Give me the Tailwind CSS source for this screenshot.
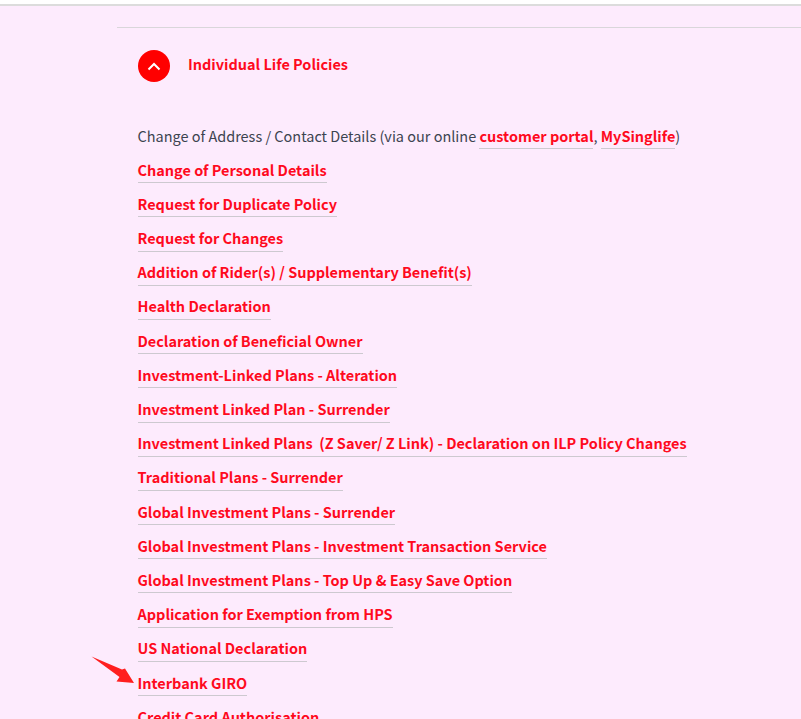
<!DOCTYPE html>
<html lang="en">
<head>
    <meta charset="UTF-8">
    <title>Individual Life Policies</title>
    <script src="https://cdn.jsdelivr.net/npm/@tailwindcss/browser@4"></script>
</head>
<body class="bg-[#fdebfd] h-[719px] overflow-hidden relative font-['Noto_Sans_CJK_SC',sans-serif] text-[14.480px]">
    <div class="h-[6px] bg-white border-b-2 border-[#dcdcdc]"></div>

    <div class="ml-[117px] mt-[21px] border-t border-[#d9d6da]">
        <!-- accordion header -->
        <div class="flex items-center ml-[21px] mt-[22px]">
            <div class="w-8 h-8 rounded-full bg-[#ff0000] flex items-center justify-center">
                <svg width="14" height="9" viewBox="0 0 14 9" fill="none" stroke="white" stroke-width="2"><path d="M1.500 7.500 7 2l5.500 5.500"/></svg>
            </div>
            <span class="ml-[18px] -mt-[5px] font-bold text-[#ff0a1e]">Individual Life Policies</span>
        </div>

        <!-- forms list -->
        <ul class="ml-[20.500px] mt-[41.500px] flex flex-col leading-[24px]">
            <li class="h-[34.200px] text-[#3c4450]">Change of Address / Contact Details (via our online <a class="inline-block h-[25.500px] font-bold text-[#ff0a1e] border-b border-[#cdc9d0]">customer portal</a>, <a class="inline-block h-[25.500px] font-bold text-[#ff0a1e] border-b border-[#cdc9d0]">MySinglife</a>)</li>
            <li class="h-[34.200px]"><a class="inline-block h-[25.500px] font-bold text-[#ff0a1e] border-b border-[#cdc9d0]">Change of Personal Details</a></li>
            <li class="h-[34.200px]"><a class="inline-block h-[25.500px] font-bold text-[#ff0a1e] border-b border-[#cdc9d0]">Request for Duplicate Policy</a></li>
            <li class="h-[34.200px]"><a class="inline-block h-[25.500px] font-bold text-[#ff0a1e] border-b border-[#cdc9d0]">Request for Changes</a></li>
            <li class="h-[34.200px]"><a class="inline-block h-[25.500px] font-bold text-[#ff0a1e] border-b border-[#cdc9d0]">Addition of Rider(s) / Supplementary Benefit(s)</a></li>
            <li class="h-[34.200px]"><a class="inline-block h-[25.500px] font-bold text-[#ff0a1e] border-b border-[#cdc9d0]">Health Declaration</a></li>
            <li class="h-[34.200px]"><a class="inline-block h-[25.500px] font-bold text-[#ff0a1e] border-b border-[#cdc9d0]">Declaration of Beneficial Owner</a></li>
            <li class="h-[34.200px]"><a class="inline-block h-[25.500px] font-bold text-[#ff0a1e] border-b border-[#cdc9d0]">Investment-Linked Plans - Alteration</a></li>
            <li class="h-[34.200px]"><a class="inline-block h-[25.500px] font-bold text-[#ff0a1e] border-b border-[#cdc9d0]">Investment Linked Plan - Surrender</a></li>
            <li class="h-[34.200px]"><a class="inline-block h-[25.500px] font-bold text-[#ff0a1e] border-b border-[#cdc9d0] whitespace-pre">Investment Linked Plans  (Z Saver/ Z Link) - Declaration on ILP Policy Changes</a></li>
            <li class="h-[34.200px]"><a class="inline-block h-[25.500px] font-bold text-[#ff0a1e] border-b border-[#cdc9d0]">Traditional Plans - Surrender</a></li>
            <li class="h-[34.200px]"><a class="inline-block h-[25.500px] font-bold text-[#ff0a1e] border-b border-[#cdc9d0]">Global Investment Plans - Surrender</a></li>
            <li class="h-[34.200px]"><a class="inline-block h-[25.500px] font-bold text-[#ff0a1e] border-b border-[#cdc9d0]">Global Investment Plans - Investment Transaction Service</a></li>
            <li class="h-[34.200px]"><a class="inline-block h-[25.500px] font-bold text-[#ff0a1e] border-b border-[#cdc9d0]">Global Investment Plans - Top Up &amp; Easy Save Option</a></li>
            <li class="h-[34.200px]"><a class="inline-block h-[25.500px] font-bold text-[#ff0a1e] border-b border-[#cdc9d0]">Application for Exemption from HPS</a></li>
            <li class="h-[34.200px]"><a class="inline-block h-[25.500px] font-bold text-[#ff0a1e] border-b border-[#cdc9d0]">US National Declaration</a></li>
            <li class="h-[34.200px]"><a class="inline-block h-[25.500px] font-bold text-[#ff0a1e] border-b border-[#cdc9d0]">Interbank GIRO</a></li>
            <li class="h-[34.200px]"><a class="inline-block h-[25.500px] font-bold text-[#ff0a1e] border-b border-[#cdc9d0]">Credit Card Authorisation</a></li>
        </ul>
    </div>

    <!-- annotation arrow -->
    <svg class="absolute left-[90px] top-[655px]" width="46" height="32" viewBox="0 0 46 32"><path d="M1.500 1.500 L32 14.500 L35 13.500 L44 28 L26.500 26.500 L29.500 22 Z" fill="#ff1f1f"/></svg>
</body>
</html>
